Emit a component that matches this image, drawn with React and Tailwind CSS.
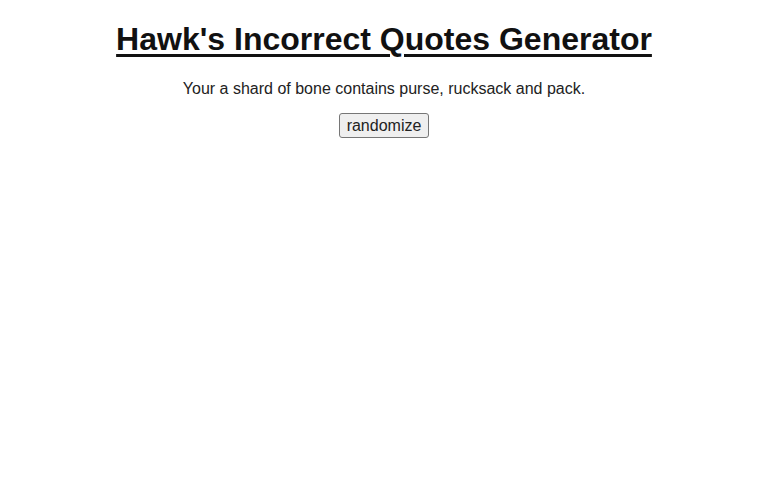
import { useState } from "react";

const subjects = ["Your a shard of bone", "Hawk's pocket", "The old satchel"];
const contents = ["purse, rucksack and pack.", "three feathers and a key.", "nothing at all."];

export default function App() {
  const [quote, setQuote] = useState(
    "Your a shard of bone contains purse, rucksack and pack."
  );

  const randomize = () => {
    const s = subjects[Math.floor(Math.random() * subjects.length)];
    const c = contents[Math.floor(Math.random() * contents.length)];
    setQuote(`${s} contains ${c}`);
  };

  return (
    <div className="min-h-[480px] bg-white text-center text-[#111] font-['Liberation_Sans',Arial,sans-serif]">
      <h1 className="pt-[21px] text-[32px] leading-[37px] font-bold underline underline-offset-[4px] decoration-[3px]">
        Hawk's Incorrect Quotes Generator
      </h1>
      <p className="mt-[22px] text-[16px] leading-[18px] text-[#222]">{quote}</p>
      <button
        type="button"
        className="mt-[15px] h-[25px] px-[7px] text-[16px] leading-[18px] text-[#222] bg-[#efefef] border border-[#767676] rounded-[3px]"
        onClick={randomize}
      >
        randomize
      </button>
    </div>
  );
}
